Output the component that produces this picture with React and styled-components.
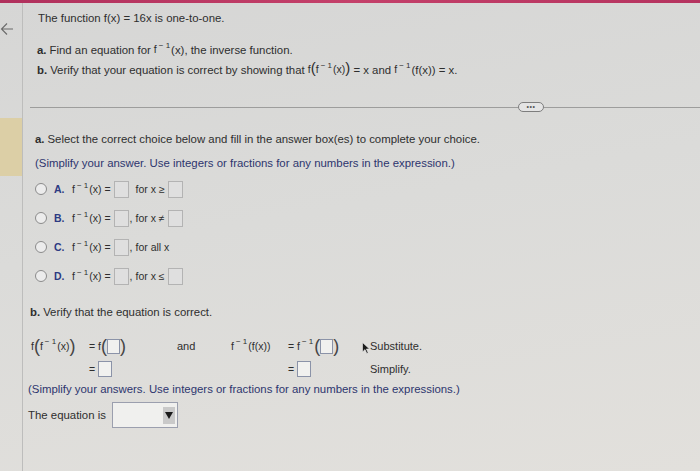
import React from "react";
import styled, { createGlobalStyle } from "styled-components";

const Global = createGlobalStyle`
  html, body { margin: 0; padding: 0; }
  body {
    width: 700px; height: 471px; overflow: hidden;
    background: #d9d9d7;
    font-family: "Liberation Sans", Arial, sans-serif;
    color: #2e2e2e;
  }
`;

const Page = styled.div`
  width: 700px;
  height: 471px;
  display: flex;
  flex-direction: column;
  background: linear-gradient(170deg, #d6d6d5 0%, #dbdbd9 45%, #e2e0dc 100%);
`;

const TopStrip = styled.div`
  height: 3px;
  background: linear-gradient(90deg, #b0305c, #c4406a 50%, #b5335f);
  flex: none;
`;

const Body = styled.div`
  flex: 1;
  display: flex;
`;

const Rail = styled.div`
  width: 22px;
  flex: none;
  border-right: 1px solid #bdbdbc;
  display: flex;
  flex-direction: column;
`;

const BackArrow = styled.svg`
  margin: 19px 0 0 0;
  width: 14px;
  height: 14px;
`;

const RailTab = styled.div`
  margin-top: 82px;
  height: 58px;
  background: #dccfa6;
`;

const Main = styled.div`
  flex: 1;
  display: flex;
  flex-direction: column;
  font-size: 11.4px;
`;

const Line = styled.div`
  height: ${(p) => p.$h || 16}px;
  line-height: 16px;
  margin-top: ${(p) => p.$mt || 0}px;
  margin-left: ${(p) => p.$ml || 15}px;
  white-space: nowrap;
  color: ${(p) => (p.$blue ? "#2d356e" : "#2e2e2e")};
  display: flex;
  align-items: center;
`;

const B = styled.b`
  font-weight: bold;
  margin-right: 3px;
`;

const Sup = styled.span`
  font-size: 8px;
  position: relative;
  top: -5px;
  margin: 0 1px 0 2px;
`;

const Big = styled.span`
  font-size: 15px;
  line-height: 10px;
`;

const Divider = styled.div`
  margin: 23px 0 0 7px;
  height: 12px;
  display: flex;
  align-items: center;
  &::before, &::after {
    content: "";
    height: 1px;
    background: #9d9d9c;
  }
  &::before { width: 488px; }
  &::after { flex: 1; }
`;

const Pill = styled.div`
  width: 24px;
  height: 8px;
  border: 1px solid #7d7d7d;
  border-radius: 5px;
  background: #e4e4e4;
  display: flex;
  align-items: center;
  justify-content: center;
  font-size: 7px;
  line-height: 8px;
  letter-spacing: 0.5px;
  color: #555;
`;

const OptionRow = styled.div`
  height: 20px;
  margin-top: ${(p) => p.$mt}px;
  margin-left: 12px;
  display: flex;
  align-items: center;
  white-space: nowrap;
`;

const Radio = styled.span`
  width: 10px;
  height: 10px;
  border-radius: 50%;
  border: 1px solid #8b8b8b;
  background: #ececec;
  margin-right: 7px;
`;

const Letter = styled.span`
  color: #2d3a82;
  font-weight: bold;
  font-size: 10.5px;
  width: 18px;
`;

const AnsBox = styled.span`
  display: inline-block;
  width: ${(p) => p.$w || 15}px;
  height: ${(p) => p.$h || 17}px;
  border: 1px solid ${(p) => (p.$white ? "#8b93a8" : "#b3b3b3")};
  background: ${(p) => (p.$white ? "#f1f1ef" : "#dfdfdf")};
  margin: 0 ${(p) => p.$mr || 0}px 0 ${(p) => p.$ml || 0}px;
  box-sizing: border-box;
`;

const MathText = styled.span`
  font-size: 10.5px;
  margin-left: ${(p) => p.$ml || 0}px;
  margin-right: ${(p) => p.$mr || 0}px;
`;

const EqGrid = styled.div`
  margin-top: 15px;
  margin-left: 8px;
  display: grid;
  grid-template-columns: 55px 91px 54px 54px 77px auto;
  grid-template-rows: 22px 24px;
  align-items: center;
  font-size: 10.5px;
  white-space: nowrap;
`;

const Cell = styled.div`
  display: flex;
  align-items: center;
  grid-column: ${(p) => p.$col};
  grid-row: ${(p) => p.$row};
  padding-left: ${(p) => p.$pl || 0}px;
`;

const Paren = styled.span`
  font-size: 18px;
  line-height: 16px;
  font-weight: 300;
  color: #444;
`;

const Cursor = styled.svg`
  width: 8px;
  height: 12px;
  margin: 4px 0 0 0;
`;

const Note = styled.span`
  font-size: 11px;
`;

const Select = styled.div`
  margin-left: 6px;
  width: 66px;
  height: 26px;
  box-sizing: border-box;
  border: 1px solid #9b9fae;
  background: #f0f0ee;
  display: flex;
  justify-content: flex-end;
  align-items: center;
  padding-right: 2px;
`;

const SelectBtn = styled.div`
  width: 12px;
  height: 17px;
  background: #c9c9c9;
  display: flex;
  align-items: center;
  justify-content: center;
  &::after {
    content: "";
    border-left: 4px solid transparent;
    border-right: 4px solid transparent;
    border-top: 7px solid #1a1a1a;
  }
`;

const Finv = () => (
  <>
    f<Sup>− 1</Sup>
  </>
);

const options = [
  { l: "A.", mt: 8, sep: "", tail: "for x ≥", gap: 4 },
  { l: "B.", mt: 9, sep: ",", tail: "for x ≠", gap: 1 },
  { l: "C.", mt: 9, sep: ",", tail: "for all x", gap: 1, noBox: true },
  { l: "D.", mt: 9, sep: ",", tail: "for x ≤", gap: 1 },
];

export default function App() {
  return (
    <Page>
      <Global />
      <TopStrip />
      <Body>
        <Rail>
          <BackArrow viewBox="0 0 14 14">
            <path d="M13 7H1.5M7 1.5L1.5 7L7 12.5" fill="none" stroke="#6a6a6a" strokeWidth="1.1" />
          </BackArrow>
          <RailTab />
        </Rail>
        <Main>
          <Line $mt={7}>The function f(x) = 16x is one-to-one.</Line>
          <Line $mt={16} $ml={14}>
            <B>a.</B> Find an equation for <MathText $ml={3}><Finv /></MathText>(x), the inverse function.
          </Line>
          <Line $mt={4} $ml={14}>
            <B>b.</B> Verify that your equation is correct by showing that&nbsp;
            <MathText>
              f<Big>(</Big><Finv />(x)<Big>)</Big>
            </MathText>
            &nbsp;= x and&nbsp;<MathText><Finv /></MathText>(f(x)) = x.
          </Line>
          <Divider>
            <Pill>•••</Pill>
          </Divider>
          <Line $mt={18} $ml={12}>
            <B>a.</B> Select the correct choice below and fill in the answer box(es) to complete your choice.
          </Line>
          <Line $mt={8} $ml={12} $blue>
            (Simplify your answer. Use integers or fractions for any numbers in the expression.)
          </Line>
          {options.map((o) => (
            <OptionRow key={o.l} $mt={o.mt}>
              <Radio />
              <Letter>{o.l}</Letter>
              <MathText>
                <Finv />(x) =
              </MathText>
              <AnsBox $ml={3} $mr={o.gap} />
              <MathText $mr={3}>{o.sep}</MathText>
              <MathText>{o.tail}</MathText>
              {!o.noBox && <AnsBox $ml={3} />}
            </OptionRow>
          ))}
          <Line $mt={18} $ml={7}>
            <B>b.</B> Verify that the equation is correct.
          </Line>
          <EqGrid>
            <Cell $col={1} $row={1}>
              f<Paren>(</Paren><Finv />(x)<Paren>)</Paren>
            </Cell>
            <Cell $col={2} $row={1}>
              &nbsp;= f<Paren>(</Paren>
              <AnsBox $white $w={13} $h={15} />
              <Paren>)</Paren>
            </Cell>
            <Cell $col={3} $row={1}>
              <Note>and</Note>
            </Cell>
            <Cell $col={4} $row={1}>
              <Finv />(f(x))
            </Cell>
            <Cell $col={5} $row={1}>
              &nbsp;= <Finv /><Paren>(</Paren>
              <AnsBox $white $w={13} $h={15} />
              <Paren>)</Paren>
            </Cell>
            <Cell $col={6} $row={1}>
              <Cursor viewBox="0 0 8 12">
                <path d="M0.5 0.5L0.5 10L3 7.6L4.8 11.5L6.2 10.8L4.4 7H7.5Z" fill="#1b1b1b" stroke="#eee" strokeWidth="0.6" />
              </Cursor>
              <Note>Substitute.</Note>
            </Cell>
            <Cell $col={2} $row={2}>
              &nbsp;=&nbsp;
              <AnsBox $white $w={14} $h={16} />
            </Cell>
            <Cell $col={5} $row={2}>
              &nbsp;=&nbsp;
              <AnsBox $white $w={14} $h={16} />
            </Cell>
            <Cell $col={6} $row={2} $pl={8}>
              <Note>Simplify.</Note>
            </Cell>
          </EqGrid>
          <Line $mt={0} $ml={5} $blue>
            (Simplify your answers. Use integers or fractions for any numbers in the expressions.)
          </Line>
          <Line $mt={5} $ml={5} $h={26}>
            The equation is
            <Select>
              <SelectBtn />
            </Select>
          </Line>
        </Main>
      </Body>
    </Page>
  );
}
